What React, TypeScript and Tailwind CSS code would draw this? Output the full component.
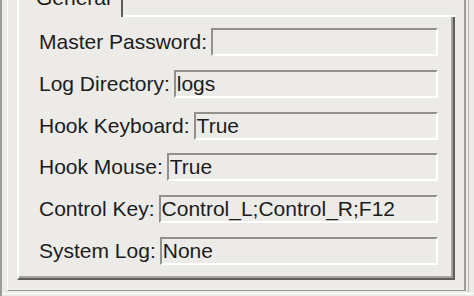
const rows: { label: string; value: string }[] = [
  { label: "Master Password:", value: "" },
  { label: "Log Directory:", value: "logs" },
  { label: "Hook Keyboard:", value: "True" },
  { label: "Hook Mouse:", value: "True" },
  { label: "Control Key:", value: "Control_L;Control_R;F12" },
  { label: "System Log:", value: "None" },
];

const Entry = ({ value }: { value: string }) => {
  return (
    <div className="flex h-[28px] flex-1 items-center border-2 border-t-[#92908c] border-l-[#92908c] border-b-white border-r-white pl-[1px]">
      <span className="whitespace-nowrap leading-[24px]">{value}</span>
    </div>
  );
};

export default function App() {
  return (
    <div
      className="flex h-[296px] w-[474px] flex-col overflow-hidden border-l-2 border-[#9d9b97] bg-[#edebe8] text-[21px] text-[#1c1c1c]"
      style={{ fontFamily: '"Liberation Sans", Arial, sans-serif' }}
    >
      <div className="flex h-[292px] flex-row items-start">
        {/* outer frame */}
        <div className="ml-[5px] -mt-[20px] flex h-[311px] w-[459px] flex-col border-l border-b border-r-2 border-l-white border-b-[#9d9b97] border-r-[#9d9b97] pt-[2px] pl-[9px]">
          {/* notebook */}
          <div className="flex w-[438px] flex-col">
            <div className="flex h-[35px] flex-row">
              <div className="h-[35px] w-[106px] border-t-2 border-l-2 border-r-2 border-t-white border-l-white border-r-[#5f5d59] pt-[2px] pl-[17px] leading-[24px]">
                General
              </div>
              <div className="h-[35px] flex-1 border-b-2 border-white" />
            </div>
            <div className="flex h-[263px] flex-col gap-[13.8px] border-l-2 border-r-2 border-b-2 border-l-white border-r-[#5f5d59] border-b-[#5f5d59] pt-[11px] pl-[20px] pr-[15px] shadow-[inset_-2px_-2px_0_0_#a6a4a0]">
              {rows.map((row) => (
                <div key={row.label} className="flex h-[28px] flex-row items-center gap-[4px]">
                  <span className="whitespace-nowrap leading-[24px]">{row.label}</span>
                  <Entry value={row.value} />
                </div>
              ))}
            </div>
          </div>
        </div>
        <div className="ml-[2px] h-full w-px bg-[#b8b6b2]" />
      </div>
      <div className="mt-px h-px w-full bg-white" />
    </div>
  );
}
